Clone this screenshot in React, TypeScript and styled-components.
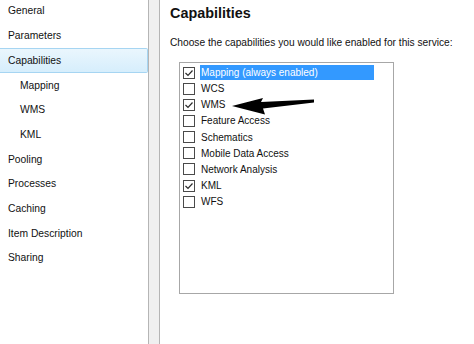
import styled, { createGlobalStyle } from 'styled-components'

const GlobalStyle = createGlobalStyle`
  html, body {
    margin: 0;
    padding: 0;
    background: #ffffff;
  }
  body {
    font-family: 'Liberation Sans', Arial, sans-serif;
    color: #111111;
  }
`

interface NavEntry {
  label: string
  sub?: boolean
  active?: boolean
}

const navItems: NavEntry[] = [
  { label: 'General' },
  { label: 'Parameters' },
  { label: 'Capabilities', active: true },
  { label: 'Mapping', sub: true },
  { label: 'WMS', sub: true },
  { label: 'KML', sub: true },
  { label: 'Pooling' },
  { label: 'Processes' },
  { label: 'Caching' },
  { label: 'Item Description' },
  { label: 'Sharing' },
]

interface Capability {
  name: string
  checked: boolean
  selected?: boolean
}

const capabilities: Capability[] = [
  { name: 'Mapping (always enabled)', checked: true, selected: true },
  { name: 'WCS', checked: false },
  { name: 'WMS', checked: true },
  { name: 'Feature Access', checked: false },
  { name: 'Schematics', checked: false },
  { name: 'Mobile Data Access', checked: false },
  { name: 'Network Analysis', checked: false },
  { name: 'KML', checked: true },
  { name: 'WFS', checked: false },
]

function CheckMark() {
  return (
    <svg width="10" height="10" viewBox="0 0 10 10">
      <path d="M1.5 5 L4 7.5 L8.5 2.5" fill="none" stroke="#2b2b2b" strokeWidth="1.2" />
    </svg>
  )
}

// hand-drawn style pointer towards the WMS row
function Arrow() {
  return (
    <ArrowSvg width="90" height="22" viewBox="0 0 90 22">
      <polygon points="2,10 33,2 31,6 84,3.5 84,6.5 33,12.5 35,18.5" fill="#000" />
    </ArrowSvg>
  )
}

function App() {
  return (
    <>
      <GlobalStyle />
      <Window>
        <Nav>
          <NavList>
            {navItems.map((item) => (
              <NavItem key={item.label} $sub={item.sub} $active={item.active}>
                {item.label}
              </NavItem>
            ))}
          </NavList>
        </Nav>
        <Splitter />
        <Content>
          <Title>Capabilities</Title>
          <Description>Choose the capabilities you would like enabled for this service:</Description>
          <ListBox>
            {capabilities.map((cap) => (
              <ListRow key={cap.name}>
                <Box>{cap.checked && <CheckMark />}</Box>
                <RowLabel $selected={cap.selected}>{cap.name}</RowLabel>
              </ListRow>
            ))}
          </ListBox>
        </Content>
        <Arrow />
      </Window>
    </>
  )
}

const Window = styled.div`
  position: relative;
  display: flex;
  width: 474px;
  height: 344px;
  overflow: hidden;
  background: #ffffff;
`

const Nav = styled.div`
  width: 148px;
  flex-shrink: 0;
  background: #ffffff;
`

const NavList = styled.div`
  display: flex;
  flex-direction: column;
  margin-top: -1.4px;
`

const NavItem = styled.div<{ $sub?: boolean; $active?: boolean }>`
  box-sizing: border-box;
  height: 24.7px;
  display: flex;
  align-items: center;
  padding-left: ${(p) => (p.$sub ? 20 : 8)}px;
  font-size: 10.3px;
  color: #111111;
  border: 1px solid ${(p) => (p.$active ? '#a6d5f2' : 'transparent')};
  border-left: none;
  border-radius: 0 2px 2px 0;
  background: ${(p) => (p.$active ? 'linear-gradient(#eaf6fd, #d6eefc)' : 'transparent')};
`

const Splitter = styled.div`
  width: 10px;
  flex-shrink: 0;
  background: #f0f0f0;
  border-left: 1px solid #b5b5b5;
  border-right: 1px solid #b5b5b5;
`

const Content = styled.div`
  flex: 1;
  padding: 3px 0 0 10px;
`

const Title = styled.div`
  font-size: 14.4px;
  font-weight: bold;
  line-height: 20px;
  color: #111111;
`

const Description = styled.div`
  margin-top: 13px;
  font-size: 10.2px;
  line-height: 14px;
  color: #111111;
`

const ListBox = styled.div`
  box-sizing: border-box;
  margin: 12px 0 0 9px;
  width: 215px;
  height: 232px;
  border: 1px solid #a7a7a7;
  padding: 1.5px 0 0 3px;
  display: flex;
  flex-direction: column;
`

const ListRow = styled.div`
  height: 16.15px;
  display: flex;
  align-items: center;
`

const Box = styled.div`
  box-sizing: border-box;
  width: 12px;
  height: 12px;
  flex-shrink: 0;
  border: 1px solid #4a4a4a;
  background: #ffffff;
  display: flex;
  align-items: center;
  justify-content: center;
`

const RowLabel = styled.div<{ $selected?: boolean }>`
  margin-left: 5px;
  margin-right: 19px;
  flex: 1;
  height: 15px;
  display: flex;
  align-items: center;
  padding-left: 1px;
  font-size: 10px;
  color: ${(p) => (p.$selected ? '#ffffff' : '#111111')};
  background: ${(p) => (p.$selected ? '#3399ff' : 'transparent')};
`

const ArrowSvg = styled.svg`
  position: absolute;
  left: 230px;
  top: 96px;
`

export default App
